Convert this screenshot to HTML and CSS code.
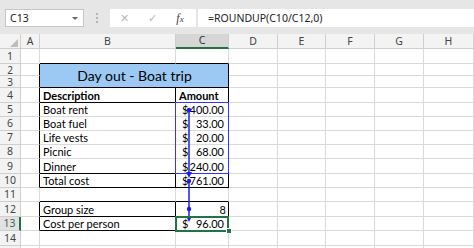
FILE: index.html
```html
<!DOCTYPE html>
<html lang="en">
<head>
	<meta charset="UTF-8">
	<title>Day out - Boat trip</title>
	<link rel="stylesheet" href="styles.css">
</head>
<body>
	<div class="page">
		<div class="toolbar">
			<div class="namebox"><span>C13</span><span class="caret"></span></div>
			<div class="grip"></div>
			<div class="fxbtns">
				<span class="btn muted">&#x2715;</span>
				<span class="btn muted">&#x2713;</span>
				<span class="btn fx">f<small>x</small></span>
			</div>
			<div class="formula">=ROUNDUP(C10/C12,0)</div>
		</div>

		<div class="sheet">
			<!-- column headers -->
			<div class="hd corner"><span class="tri"></span></div>
			<div class="hd">A</div><div class="hd">B</div><div class="hd sel-col">C</div><div class="hd">D</div><div class="hd">E</div><div class="hd">F</div><div class="hd">G</div><div class="hd">H</div>

			<div class="rh">1</div><div class="c"></div><div class="c kb"></div><div class="c kb"></div><div class="c"></div><div class="c"></div><div class="c"></div><div class="c"></div><div class="c"></div>
			<div class="rh short">2</div><div class="c kr"></div><div class="c title">Day out - Boat trip</div><div class="c"></div><div class="c"></div><div class="c"></div><div class="c"></div><div class="c"></div>
			<div class="rh short">3</div><div class="c kr"></div><div class="c"></div><div class="c"></div><div class="c"></div><div class="c"></div><div class="c"></div>
			<div class="rh">4</div><div class="c kr"></div><div class="c kr kb b">Description</div><div class="c kr kb b amt">Amount</div><div class="c"></div><div class="c"></div><div class="c"></div><div class="c"></div><div class="c"></div>
			<div class="rh">5</div><div class="c kr"></div><div class="c kr">Boat rent</div><div class="c kr acc"><span>$</span><span>400.00</span></div><div class="c"></div><div class="c"></div><div class="c"></div><div class="c"></div><div class="c"></div>
			<div class="rh">6</div><div class="c kr"></div><div class="c kr">Boat fuel</div><div class="c kr acc"><span>$</span><span>33.00</span></div><div class="c"></div><div class="c"></div><div class="c"></div><div class="c"></div><div class="c"></div>
			<div class="rh">7</div><div class="c kr"></div><div class="c kr">Life vests</div><div class="c kr acc"><span>$</span><span>20.00</span></div><div class="c"></div><div class="c"></div><div class="c"></div><div class="c"></div><div class="c"></div>
			<div class="rh">8</div><div class="c kr"></div><div class="c kr">Picnic</div><div class="c kr acc"><span>$</span><span>68.00</span></div><div class="c"></div><div class="c"></div><div class="c"></div><div class="c"></div><div class="c"></div>
			<div class="rh">9</div><div class="c kr"></div><div class="c kr kb">Dinner</div><div class="c kr kb acc"><span>$</span><span>240.00</span></div><div class="c"></div><div class="c"></div><div class="c"></div><div class="c"></div><div class="c"></div>
			<div class="rh">10</div><div class="c kr"></div><div class="c kr kb">Total cost</div><div class="c kr kb acc"><span>$</span><span>761.00</span></div><div class="c"></div><div class="c"></div><div class="c"></div><div class="c"></div><div class="c"></div>
			<div class="rh">11</div><div class="c"></div><div class="c kb"></div><div class="c kb"></div><div class="c"></div><div class="c"></div><div class="c"></div><div class="c"></div><div class="c"></div>
			<div class="rh">12</div><div class="c kr"></div><div class="c kr kb">Group size</div><div class="c kr kb num">8</div><div class="c"></div><div class="c"></div><div class="c"></div><div class="c"></div><div class="c"></div>
			<div class="rh sel-row">13</div><div class="c kr"></div><div class="c kr kb">Cost per person</div><div class="c kr kb acc"><span>$</span><span>96.00</span></div><div class="c"></div><div class="c"></div><div class="c"></div><div class="c"></div><div class="c"></div>
			<div class="rh">14</div><div class="c"></div><div class="c"></div><div class="c"></div><div class="c"></div><div class="c"></div><div class="c"></div><div class="c"></div><div class="c"></div>
			<div class="rh"></div><div class="c"></div><div class="c"></div><div class="c"></div><div class="c"></div><div class="c"></div><div class="c"></div><div class="c"></div><div class="c"></div>
		</div>

		<!-- precedent arrows, range box and active cell -->
		<svg class="overlay" width="474" height="248" viewBox="0 0 474 248">
			<rect x="175.5" y="102.5" width="53" height="71" fill="none" stroke="#3434ff" stroke-width="1"/>
			<g stroke="#1c1cf0" stroke-width="1.5">
				<line x1="189" y1="110" x2="189" y2="173"/>
				<line x1="189" y1="181" x2="189" y2="217"/>
			</g>
			<g fill="#1c1cf0">
				<polygon points="186,172 192,172 189,178"/>
				<polygon points="186,216 192,216 189,222"/>
				<circle cx="189" cy="110" r="2.2"/>
				<circle cx="189" cy="181" r="2.2"/>
				<circle cx="189" cy="209" r="2.2"/>
			</g>
			<rect x="176" y="217" width="52" height="14" fill="none" stroke="#217346" stroke-width="2"/>
			<rect x="226.5" y="228.5" width="5" height="5" fill="#217346" stroke="#fff" stroke-width="1"/>
		</svg>
	</div>
</body>
</html>
```

FILE: styles.css
```css
:root {
	--grid-line: #dadada;
	--header-bg: #f3f3f3;
	--header-line: #cfcfcf;
	--excel-green: #217346;
}

body {
	margin: 0;
	width: 474px;
	height: 248px;
	overflow: hidden;
	background: #fff;
	font-family: "Noto Sans", sans-serif;
}

.page {
	position: relative;
}

/* formula bar */
.toolbar {
	height: 34px;
	box-sizing: border-box;
	padding-top: 9px;
	background: #e6e6e6;
	display: flex;
	align-items: flex-start;
}

.namebox {
	margin-left: 5px;
	width: 79px;
	height: 18px;
	box-sizing: border-box;
	padding: 0 5px 0 4px;
	background: #fff;
	border: 1px solid #c6c6c6;
	display: flex;
	align-items: center;
	justify-content: space-between;
	font-size: 10.5px;
	color: #222;
}

.caret {
	width: 0;
	height: 0;
	border-left: 3px solid transparent;
	border-right: 3px solid transparent;
	border-top: 3px solid #666;
}

.grip {
	margin: 4px 0 0 12px;
	height: 10px;
	border-left: 2px dotted #b4b4b4;
}

.fxbtns {
	margin-left: 12px;
	width: 86px;
	height: 18px;
	background: #fff;
	display: flex;
	align-items: center;
}

.btn {
	width: 28px;
	text-align: center;
	font-size: 11px;
	line-height: 18px;
}

.btn.muted {
	color: #b8b8b8;
}

.btn.fx {
	font-family: "Liberation Serif", serif;
	font-style: italic;
	font-size: 12px;
	color: #444;
}

.btn.fx small {
	font-size: 9px;
}

.formula {
	flex: 1;
	margin-left: 2px;
	height: 18px;
	padding-left: 10px;
	background: #fff;
	font-size: 10.5px;
	line-height: 18px;
	color: #222;
}

/* sheet grid */
.sheet {
	display: grid;
	grid-template-columns: 21px 19px 136px 53px 49px 48px 49px 49px 50px;
	grid-template-rows: 15px 15px 12px 12px 15px 14px 14px 14px 14px 15px 14px 14px 15px 14px 15px 14px;
}

.hd,
.rh {
	box-sizing: border-box;
	background: var(--header-bg);
	border-right: 1px solid var(--header-line);
	border-bottom: 1px solid var(--header-line);
	display: flex;
	align-items: center;
	justify-content: center;
	font-size: 10.5px;
	line-height: 11px;
	color: #444;
}

.rh.short {
	font-size: 10px;
	line-height: 10px;
}

.corner {
	justify-content: flex-end;
	align-items: flex-end;
	padding: 0 2px 1px 0;
}

.tri {
	width: 0;
	height: 0;
	border-left: 8px solid transparent;
	border-bottom: 8px solid #bdbdbd;
}

.sel-col {
	background: #d6d6d6;
	border-bottom: 2px solid var(--excel-green);
	color: #333;
}

.sel-row {
	background: #e2e2e2;
	border-right: 2px solid var(--excel-green);
	color: #3b6b4f;
}

.c {
	box-sizing: border-box;
	border-right: 1px solid var(--grid-line);
	border-bottom: 1px solid var(--grid-line);
	padding: 0 2px 0 3px;
	display: flex;
	align-items: flex-end;
	font-family: Lato, "Liberation Sans", sans-serif;
	font-size: 11px;
	line-height: 13px;
	color: #000;
	white-space: nowrap;
}

.kr {
	border-right-color: #000;
}

.kb {
	border-bottom-color: #000;
}

.b {
	font-weight: bold;
}

.amt {
	padding-left: 3px;
}

.acc {
	justify-content: space-between;
	padding: 0 4px 0 6px;
}

.num {
	justify-content: flex-end;
	padding-right: 2px;
}

.title {
	grid-column: span 2;
	grid-row: span 2;
	background: #9bc9f3;
	border-right-color: #000;
	border-bottom-color: #000;
	justify-content: center;
	align-items: center;
	font-size: 14px;
	line-height: 16px;
}

.overlay {
	position: absolute;
	top: 0;
	left: 0;
	pointer-events: none;
}
```
